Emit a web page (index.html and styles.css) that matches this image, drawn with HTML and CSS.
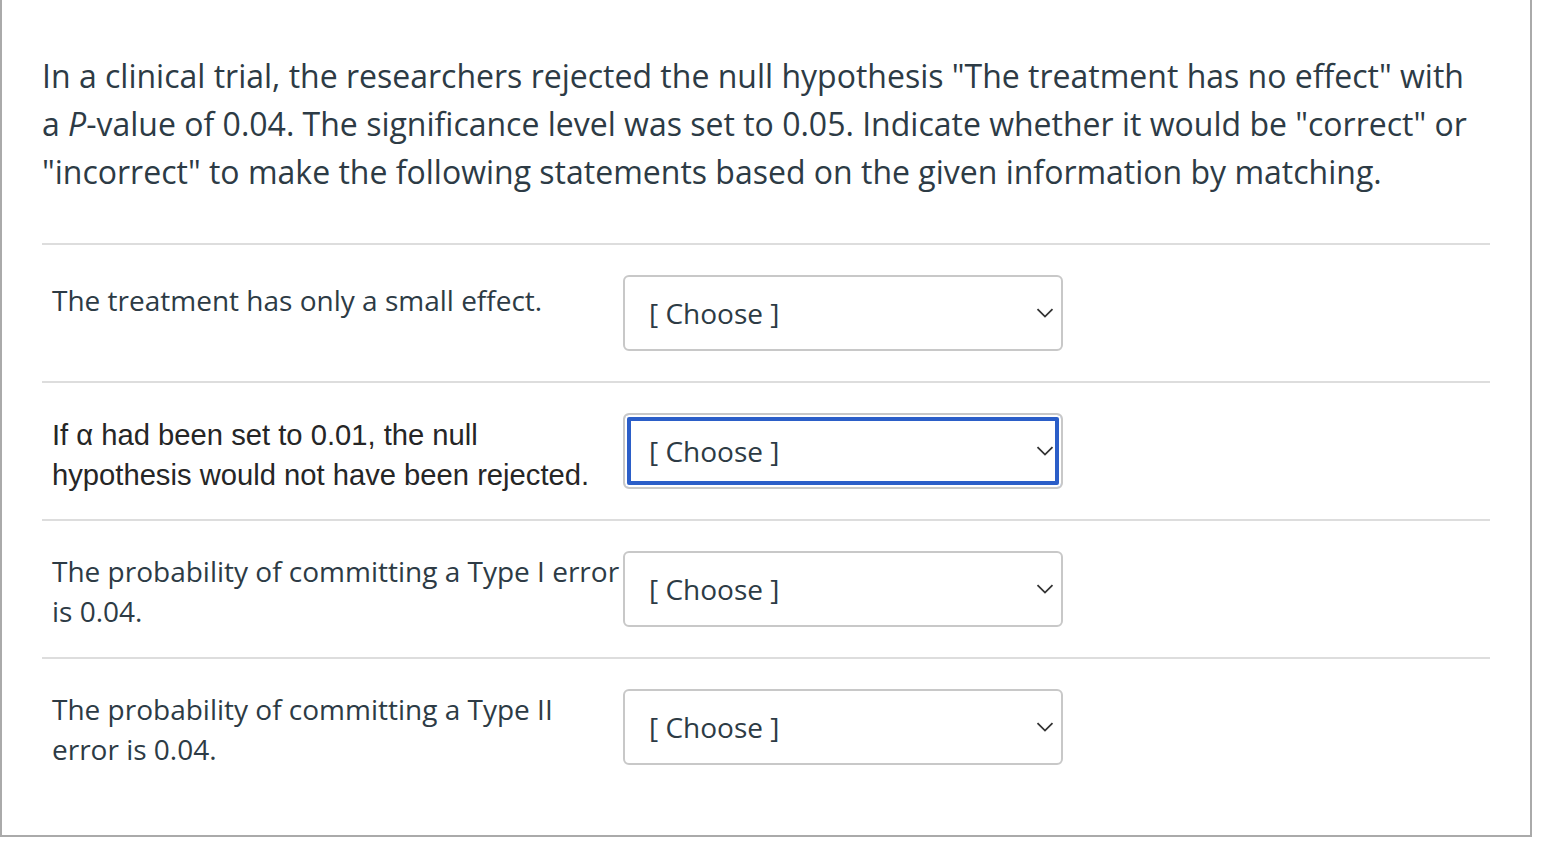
FILE: index.html
```html
<!DOCTYPE html>
<html lang="en">
<head>
    <meta charset="UTF-8">
    <meta name="viewport" content="width=device-width, initial-scale=1.0">
    <title>Matching question</title>
    <link rel="stylesheet" href="styles.css">
</head>
<body>
    <div class="quiz-frame">
        <div class="question-text">
            <p>In a clinical trial, the researchers rejected the null hypothesis "The treatment has no effect" with a <em>P</em>-value of 0.04. The significance level was set to 0.05. Indicate whether it would be "correct" or "incorrect" to make the following statements based on the given information by matching.</p>
        </div>

        <div class="answers">
            <div class="match-row">
                <div class="match-label match-label--first">The treatment has only a small effect.</div>
                <div class="select-wrap">
                    <select class="answer-select">
                        <option>[ Choose ]</option>
                        <option>correct</option>
                        <option>incorrect</option>
                    </select>
                    <svg class="select-arrow" width="18" height="10" viewBox="0 0 18 10"><path d="M1.5 1.2 L9 8.6 L16.5 1.2" fill="none" stroke="#333" stroke-width="1.8"/></svg>
                </div>
            </div>

            <div class="match-row">
                <div class="match-label"><span class="helv">If α had been set to 0.01, the null hypothesis would not have been rejected.</span></div>
                <div class="select-wrap">
                    <select class="answer-select is-focused">
                        <option>[ Choose ]</option>
                        <option>correct</option>
                        <option>incorrect</option>
                    </select>
                    <svg class="select-arrow" width="18" height="10" viewBox="0 0 18 10"><path d="M1.5 1.2 L9 8.6 L16.5 1.2" fill="none" stroke="#333" stroke-width="1.8"/></svg>
                </div>
            </div>

            <div class="match-row">
                <div class="match-label">The probability of committing a Type I error is 0.04.</div>
                <div class="select-wrap">
                    <select class="answer-select">
                        <option>[ Choose ]</option>
                        <option>correct</option>
                        <option>incorrect</option>
                    </select>
                    <svg class="select-arrow" width="18" height="10" viewBox="0 0 18 10"><path d="M1.5 1.2 L9 8.6 L16.5 1.2" fill="none" stroke="#333" stroke-width="1.8"/></svg>
                </div>
            </div>

            <div class="match-row">
                <div class="match-label">The probability of committing a Type II error is 0.04.</div>
                <div class="select-wrap">
                    <select class="answer-select">
                        <option>[ Choose ]</option>
                        <option>correct</option>
                        <option>incorrect</option>
                    </select>
                    <svg class="select-arrow" width="18" height="10" viewBox="0 0 18 10"><path d="M1.5 1.2 L9 8.6 L16.5 1.2" fill="none" stroke="#333" stroke-width="1.8"/></svg>
                </div>
            </div>
        </div>
    </div>
</body>
</html>
```

FILE: styles.css
```css
* {
    margin: 0;
    padding: 0;
    box-sizing: border-box;
}

body {
    font-family: 'Open Sans', sans-serif;
    background: #ffffff;
    color: #2d3b45;
}

.quiz-frame {
    width: 1532px;
    border: 2px solid #aaaaaa;
    border-top: none;
    padding: 52px 40px 40px 40px;
}

.question-text p {
    font-size: 32px;
    line-height: 48px;
    margin-bottom: 47px;
    padding-right: 12px;
}

.match-row {
    display: flex;
    align-items: flex-start;
    border-top: 2px solid #dddddd;
    padding: 30px 0;
}

/* two-line labels run a few px past the select, the row keeps the select's height */
.match-label {
    flex: 0 0 581px;
    padding-left: 10px;
    margin-bottom: -4px;
    font-size: 28px;
    line-height: 40px;
}

.match-label--first {
    padding-top: 5px;
}

.helv {
    display: block;
    max-width: 555px;
    margin: 2px 0 -2px 0;
    font-family: 'Liberation Sans', Arial, sans-serif;
    font-size: 29.2px;
    line-height: 40px;
    color: #262626;
}

.select-wrap {
    position: relative;
    width: 440px;
}

.answer-select {
    display: block;
    width: 100%;
    height: 76px;
    appearance: none;
    -webkit-appearance: none;
    border: 2px solid #c8c8c8;
    border-radius: 6px;
    background: #ffffff;
    padding: 0 40px 0 24px;
    font-family: 'Open Sans', sans-serif;
    font-size: 28px;
    color: #2d3b45;
    outline: none;
}

.answer-select.is-focused {
    box-shadow: inset 0 0 0 2px #ffffff, inset 0 0 0 6px #2b5ec8;
}

.select-arrow {
    position: absolute;
    right: 9px;
    top: 33px;
    pointer-events: none;
}
```
